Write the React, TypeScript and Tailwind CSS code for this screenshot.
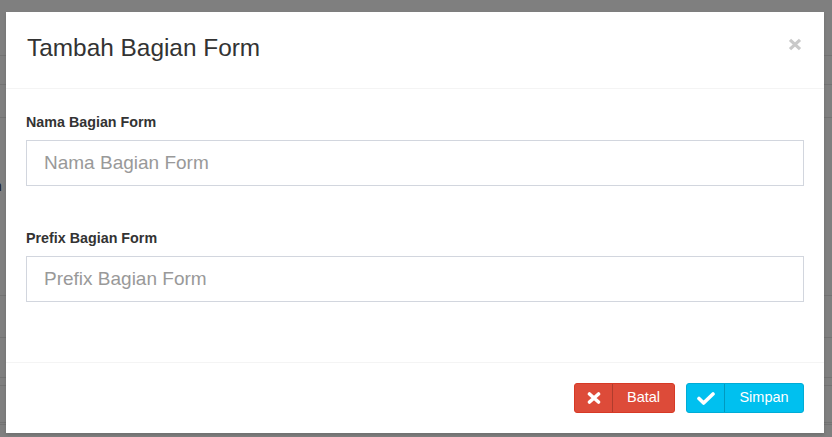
import React from "react";

const rows = [56, 29, 33, 178, 42, 40, 8, 37, 2];

function TimesIcon() {
  return (
    <svg width="14" height="12" viewBox="0 0 14 12" className="block">
      <path d="M2.5 2 L11.5 10 M11.5 2 L2.5 10" stroke="white" strokeWidth="3.6" strokeLinecap="round" fill="none" />
    </svg>
  );
}

function CheckIcon() {
  return (
    <svg width="18" height="13" viewBox="0 0 18 13" className="block">
      <path d="M2 6.5 L6.6 11 L16 2" stroke="white" strokeWidth="3.6" strokeLinecap="round" strokeLinejoin="round" fill="none" />
    </svg>
  );
}

export default function App() {
  return (
    <div className="relative h-[437px] w-[832px] overflow-hidden bg-[#7f7f7f] font-['Liberation_Sans',Arial,sans-serif]">
      {/* page behind the backdrop */}
      <div className="flex flex-col">
        {rows.map((h, i) => (
          <div key={i} className="border-b border-[#737373]" style={{ height: h }}>
            {i === 3 && (
              <span className="-ml-[6px] mt-[58px] block text-[14px] leading-[20px] text-[#1a1a1a]">n</span>
            )}
          </div>
        ))}
      </div>

      {/* modal */}
      <div className="absolute left-[6px] top-[12px] flex h-[421px] w-[818px] flex-col bg-white shadow-[0_2px_3px_rgba(0,0,0,0.125)]">
        <div className="flex h-[77px] items-start justify-between border-b border-[#f4f4f4] pl-[21px] pr-[22px] pt-[19px]">
          <h4 className="text-[24.4px] leading-[34px] text-[#333]">Tambah Bagian Form</h4>
          <button className="mt-[7px]">
            <svg width="14" height="13" viewBox="0 0 14 13" className="block">
              <path d="M2 1.8 L12 11.2 M12 1.8 L2 11.2" stroke="#c9c9c9" strokeWidth="3.2" fill="none" />
            </svg>
          </button>
        </div>

        <div className="flex flex-col px-[20px] pb-[60px] pt-[23px]">
          <label className="mb-[8px] text-[14.3px] font-bold leading-[20px] text-[#333]">Nama Bagian Form</label>
          <input
            placeholder="Nama Bagian Form"
            className="h-[46px] w-full border border-[#d2d6de] px-[17px] text-[19px] text-[#555] outline-none placeholder:text-[#999]"
          />
          <label className="mb-[8px] mt-[42px] text-[14.3px] font-bold leading-[20px] text-[#333]">Prefix Bagian Form</label>
          <input
            placeholder="Prefix Bagian Form"
            className="h-[46px] w-full border border-[#d2d6de] px-[17px] text-[19px] text-[#555] outline-none placeholder:text-[#999]"
          />
        </div>

        <div className="flex h-[71px] items-start justify-end gap-[11px] border-t border-[#f4f4f4] px-[20px] pt-[20px]">
          <button className="flex h-[30px] w-[101px] rounded-[3px] border border-[#d73925] bg-[#dd4b39] text-[14.5px] text-white">
            <span className="flex w-[38px] items-center justify-center border-r border-black/20">
              <TimesIcon />
            </span>
            <span className="flex flex-1 items-center justify-center">Batal</span>
          </button>
          <button className="flex h-[30px] w-[118px] rounded-[3px] border border-[#00acd6] bg-[#00c0ef] text-[14.5px] text-white">
            <span className="flex w-[38px] items-center justify-center border-r border-black/20">
              <CheckIcon />
            </span>
            <span className="flex flex-1 items-center justify-center">Simpan</span>
          </button>
        </div>
      </div>
    </div>
  );
}
